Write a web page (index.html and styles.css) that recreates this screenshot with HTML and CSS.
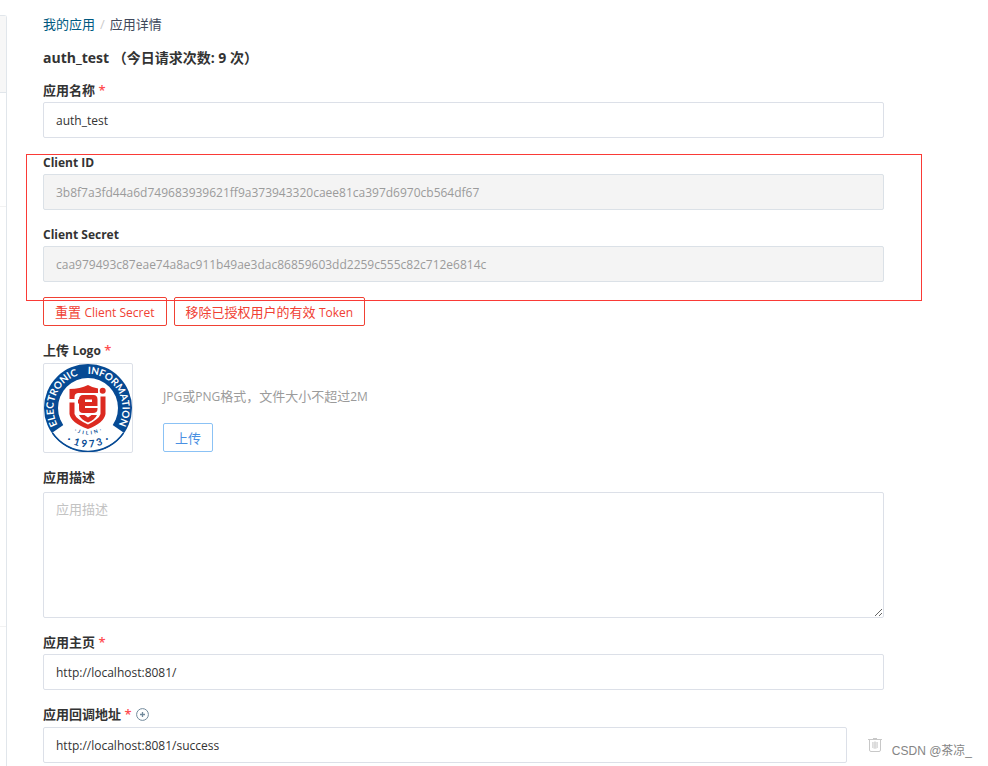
FILE: index.html
```html
<!DOCTYPE html>
<html lang="zh-CN">
<head>
<meta charset="utf-8">
<title>应用详情</title>
<link rel="stylesheet" href="styles.css">
</head>
<body>
<div class="layout">
  <aside class="sidebar">
    <div class="sidebar-head"></div>
    <div class="sidebar-block"></div>
    <div class="sidebar-block sidebar-block-tall"></div>
  </aside>
  <main class="content">
    <nav class="breadcrumb">
      <a href="#">我的应用</a>
      <span class="divider">/</span>
      <span>应用详情</span>
    </nav>
    <h1 class="title">auth_test （今日请求次数: 9 次）</h1>
    <form class="form">
      <div class="field">
        <label class="label" for="name">应用名称 <span class="required">*</span></label>
        <input class="input" id="name" type="text" value="auth_test">
      </div>
      <div class="credentials">
        <div class="field">
          <label class="label" for="client-id"><span class="latin">Client ID</span></label>
          <input class="input" id="client-id" type="text" disabled value="3b8f7a3fd44a6d749683939621ff9a373943320caee81ca397d6970cb564df67">
        </div>
        <div class="field">
          <label class="label" for="client-secret"><span class="latin">Client Secret</span></label>
          <input class="input" id="client-secret" type="text" disabled value="caa979493c87eae74a8ac911b49ae3dac86859603dd2259c555c82c712e6814c">
        </div>
      </div>
      <div class="actions">
        <button class="button danger" type="button">重置 <span class="latin">Client Secret</span></button>
        <button class="button danger" type="button">移除已授权用户的有效 <span class="latin">Token</span></button>
      </div>
      <div class="field field-roomy">
        <div class="label" id="logo-label">上传 <span class="latin">Logo</span> <span class="required">*</span></div>
        <div class="upload" role="group" aria-labelledby="logo-label">
          <div class="logo">
            <svg viewBox="0 0 88 88" aria-hidden="true">
              <defs>
                <path id="arc-top" d="M14 61.500A34.500 34.500 0 1 1 74 61.500"/>
                <path id="arc-year" d="M10 64A39.500 39.500 0 0 0 78 64"/>
                <path id="arc-city" d="M20 56A27 27 0 0 0 68 56"/>
              </defs>
              <circle cx="44" cy="44" r="44" fill="#064a94"/>
              <path d="M44 44L8.500 68.500A43 43 0 0 0 79.500 68.500Z" fill="#fff"/>
              <path d="M8.500 69A43.300 43.300 0 0 0 79.500 69" fill="none" stroke="#064a94" stroke-width="1.500"/>
              <circle cx="44" cy="44" r="30" fill="#fff"/>
              <g fill="#dc2a20">
                <path d="M25.500 35V25Q36 25 44 21Q49 24 54 24.500V29H34Q30.500 29.500 30.500 33V35Z"/>
                <path d="M25.500 38.500H30.500V50Q32 55 44 60.500Q55 55 56.500 50V32.500H61.500V50Q60 59 44 65Q27 59 25.500 50Z"/>
                <path fill-rule="evenodd" d="M35 35.500Q35 31 39 31H49.500Q53.500 31 53.500 35.500V42H41V44H53.500V45Q53.500 49 49 49H39Q35 49 35 45ZM41 35.500V38H48V35.500Z"/>
                <path d="M34 35.500H39V39.500H34Z"/>
                <path d="M35 51H40.500L44 53.500L47.500 51H53Q51 55.500 44 58.500Q37 55.500 35 51Z"/>
                <circle cx="58.700" cy="26.700" r="3"/>
              </g>
              <text class="logo-ring"><textPath href="#arc-top" startOffset="50%">ELECTRONIC&#160;&#160;&#160; INFORMATION</textPath></text>
              <text class="logo-city"><textPath href="#arc-city" startOffset="50%">·&#160; J&#160; I&#160; L&#160; I&#160; N&#160; ·</textPath></text>
              <text class="logo-year"><textPath href="#arc-year" startOffset="50%">·&#160; 1 9 7 3&#160; ·</textPath></text>
            </svg>
          </div>
          <div class="upload-info">
            <p class="hint"><span class="latin">JPG</span>或<span class="latin">PNG</span>格式，文件大小不超过<span class="latin">2M</span></p>
            <button class="button primary" type="button">上传</button>
          </div>
        </div>
      </div>
      <div class="field">
        <label class="label" for="description">应用描述</label>
        <textarea class="input textarea" id="description" placeholder="应用描述"></textarea>
      </div>
      <div class="field">
        <label class="label" for="homepage">应用主页 <span class="required">*</span></label>
        <input class="input" id="homepage" type="text" value="http://localhost:8081/">
      </div>
      <div class="field field-roomy">
        <div class="label-row">
          <label class="label" for="callback">应用回调地址 <span class="required">*</span></label>
          <button class="icon-button" type="button" aria-label="添加">
            <svg width="13" height="13" viewBox="0 0 13 13" fill="none" stroke="#71899b"><circle cx="6.500" cy="6.500" r="5.900"/><path d="M6.500 4V9M4 6.500H9" stroke-width="1.300"/></svg>
          </button>
        </div>
        <div class="callback-row">
          <input class="input" id="callback" type="text" value="http://localhost:8081/success">
          <button class="icon-button" type="button" aria-label="删除">
            <svg width="14" height="14" viewBox="0 0 14 14" fill="none" stroke="#c8c8c8"><path d="M0 1.500H14M5 .5H9M1.500 2V12Q1.500 13.500 3 13.500H11Q12.500 13.500 12.500 12V2"/><path d="M4.500 4V10M9.500 4V10M7 3V11" stroke="#ddd"/><path d="M6 4V10.500M8 4V10.500"/></svg>
          </button>
        </div>
      </div>
    </form>
  </main>
</div>
<div class="watermark">CSDN @茶凉_</div>
</body>
</html>
```
FILE: styles.css
```css
* {
  box-sizing: border-box;
}

body {
  position: relative;
  margin: 0;
  background: #fff;
  color: #333;
  font: 13px/20px "Open Sans", "Noto Sans CJK SC", sans-serif;
}

.layout {
  display: flex;
}

.sidebar {
  flex: none;
  width: 7px;
  margin-top: 15px;
  border: solid #e1e6eb;
  border-width: 1px 1px 0 0;
  border-top-right-radius: 3px;
}

.sidebar-head {
  height: 77px;
  background: #f7f7f7;
  border-bottom: 1px solid #e1e6eb;
}

.sidebar-block {
  height: 114px;
  border-bottom: 1px solid #f2f2f2;
}

.sidebar-block-tall {
  height: 420px;
}

.content {
  flex: 1;
  min-width: 0;
  padding: 14px 104px 3px 36px;
}

.breadcrumb {
  display: flex;
  gap: 5px;
  color: #40485b;
}

.breadcrumb a {
  color: #005980;
  text-decoration: none;
}

.divider {
  color: #ccc;
}

.title {
  margin: 14px 0 12px;
  font-size: 14px;
  line-height: 20px;
}

.form,
.credentials {
  display: flex;
  flex-direction: column;
  gap: 14px;
}

.field {
  display: flex;
  flex-direction: column;
  gap: 2px;
}

.field-roomy {
  gap: 3px;
}

.label {
  font-weight: 600;
}

.latin {
  font-size: 12px;
  line-height: 1;
}

.label .latin {
  font-weight: 700;
}

.required {
  color: #ff4d4f;
}

.label-row {
  display: flex;
  align-items: center;
  gap: 4px;
}

.input {
  width: 100%;
  height: 36px;
  padding: 0 12px;
  border: 1px solid #dce0e8;
  border-radius: 2px;
  background: #fff;
  color: #333;
  font: inherit;
  font-size: 12px;
}

.input:disabled {
  background: #f4f4f4;
  border-color: #dbe1e7;
  color: #9b9b9b;
}

.textarea {
  display: block;
  height: 126px;
  margin-top: 3px;
  padding-top: 6px;
  font-size: 13px;
  resize: vertical;
}

.input::placeholder {
  color: #c3c3c3;
}

.credentials {
  position: relative;
}

.credentials::after {
  content: "";
  position: absolute;
  inset: 2px -38px -19px -17px;
  border: 1px solid #fa3a36;
  pointer-events: none;
}

.actions {
  display: flex;
  gap: 7px;
  margin-top: 1px;
}

.button {
  height: 29px;
  padding: 0 11px;
  border: 1px solid;
  border-radius: 2px;
  background: #fff;
  font: inherit;
  line-height: 20px;
}

.danger {
  border-color: #f04134;
  color: #f04134;
}

.primary {
  border-color: #8bc2f5;
  color: #4a90e2;
}

.upload {
  display: flex;
  gap: 30px;
}

.logo {
  width: 90px;
  height: 90px;
  border: 1px solid #dce0e8;
  border-radius: 2px;
}

.logo svg {
  display: block;
}

.logo text {
  font-family: Lato, sans-serif;
  font-weight: 700;
  text-anchor: middle;
}

.logo-ring {
  fill: #fff;
  font-size: 10px;
}

.logo-year {
  fill: #064a94;
  font-size: 10px;
}

.logo-city {
  fill: #064a94;
  font-size: 5px;
}

.upload-info {
  display: flex;
  flex-direction: column;
  align-items: flex-start;
  gap: 17px;
  padding-top: 23px;
}

.hint {
  margin: 0;
  color: #9b9b9b;
}

.icon-button {
  display: flex;
  padding: 0;
  border: 0;
  background: none;
}

.callback-row {
  display: flex;
  align-items: center;
  gap: 21px;
  padding-right: 2px;
}

.watermark {
  position: absolute;
  right: 16px;
  bottom: 5px;
  color: #858585;
  font-family: "Liberation Sans", "Noto Sans CJK SC", sans-serif;
  font-size: 12px;
}
```
